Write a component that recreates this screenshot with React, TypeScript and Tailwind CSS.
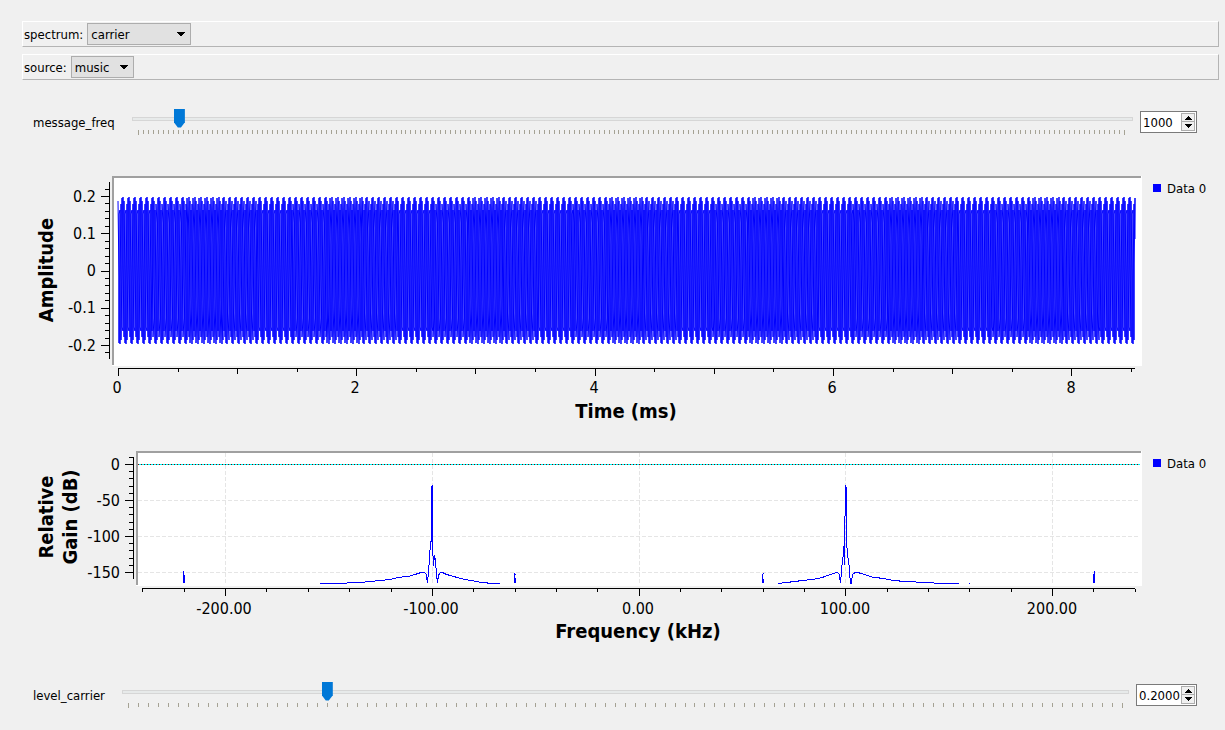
import React, { useState } from 'react';

const SAMPLE_COUNT = 4096;
const LAYERS = 6;

const range = (from: number, to: number) =>
  Array.from({ length: to - from + 1 }, (_, i) => from + i);

// 100 kHz carrier sampled at 480 kHz, snapped to whole pixels.
// Split into layers so overlapping strokes build up on each other.
const carrierLayers = (() => {
  const points = range(0, SAMPLE_COUNT - 1).map((n) => {
    const phase = ((75 * n + 20) * Math.PI) / 180;
    return [
      Math.round(118.49 + (n * 1016.5) / (SAMPLE_COUNT - 1)),
      Math.round(270.5 - 73.5 * Math.cos(phase)),
    ];
  });
  const layers: string[] = Array(LAYERS).fill('');
  for (let i = 1; i < points.length; i++) {
    const [x0, y0] = points[i - 1];
    const [x1, y1] = points[i];
    layers[i % LAYERS] += `M${x0} ${y0}L${x1} ${y1}`;
  }
  return layers;
})();

const LEFT_PEAK =
  '320,583 345,583 350,582 361,582 370,581 381,580 390,579 398,577 408,576 415,574 421,572 424,572 426,574 427,583 428,572 429,560 430,543 431,540 431,486 432,485 432,540 433,566 434,555 435,560 436,572 437,583 438,575 440,572 442,572 446,574 453,576 460,578 470,580 481,582 491,583 500,583';
const RIGHT_PEAK =
  '778,583 787,582 795,581 803,580 813,579 822,577 830,574 837,572 839,574 840,583 841,573 842,560 843,555 844,540 844,565 845,485 846,487 846,540 847,553 848,560 849,568 850,583 851,583 852,574 855,572 857,572 864,574 873,577 883,578 893,580 903,581 923,582 940,583 959,583';
const SPURS = 'M183 571V583M184 575V583M514 573V583M515 578V583M515 574V575M762 574V583M763 573V574M763 579V583M1093 574V583M1094 571V583M969 583H970';

type ToolbarProps = { id: string; label: string; options: string[]; width: string };

const Toolbar = ({ id, label, options, width }: ToolbarProps) => (
  <div className="flex h-[26px] items-center gap-1 border border-t-white border-l-white border-r-[#b4b4b4] border-b-[#b4b4b4] pl-px">
    <label htmlFor={id} className="pt-[2px]">{label}</label>
    <div className={`relative ${width}`}>
      <select
        id={id}
        className="block h-[22px] w-full appearance-none border border-[#adadad] bg-[#e1e1e1] pt-[2px] pl-[3px] outline-none"
      >
        {options.map((o) => (
          <option key={o}>{o}</option>
        ))}
      </select>
      <svg
        className="pointer-events-none absolute top-2 right-[5px] h-[5px] w-[9px]"
        viewBox="0 0 9 5"
        shapeRendering="crispEdges"
      >
        <path d="M0 1H8V2H0zM1 2H7V3H1zM2 3H6V4H2zM3 4H5V5H3z" />
      </svg>
    </div>
  </div>
);

type SliderRowProps = {
  id: string;
  min: number;
  max: number;
  step: number;
  initial: number;
  digits: number;
  ticks: number;
  labelWidth: string;
  boxWidth: string;
};

const SliderRow = ({ id, min, max, step, initial, digits, ticks, labelWidth, boxWidth }: SliderRowProps) => {
  const [value, setValue] = useState(initial);
  const nudge = (d: number) => setValue((v) => Math.min(max, Math.max(min, v + d)));

  return (
    <div className="flex items-center pr-7 pl-[33px]">
      <label htmlFor={id} className={`pt-[2px] ${labelWidth}`}>{id}</label>
      <div className="flex-1">
        <input
          id={id}
          type="range"
          min={min}
          max={max}
          step={step}
          value={value}
          onChange={(e) => setValue(Number(e.target.value))}
          className="block h-[19px] w-full appearance-none bg-transparent outline-none [&::-webkit-slider-runnable-track]:h-1 [&::-webkit-slider-runnable-track]:border [&::-webkit-slider-runnable-track]:border-[#d6d6d6] [&::-webkit-slider-runnable-track]:bg-[#e7eaea] [&::-webkit-slider-thumb]:-mt-[9px] [&::-webkit-slider-thumb]:h-[19px] [&::-webkit-slider-thumb]:w-[11px] [&::-webkit-slider-thumb]:appearance-none [&::-webkit-slider-thumb]:bg-[#0078d7] [&::-webkit-slider-thumb]:[clip-path:polygon(0_0,100%_0,100%_72%,64%_100%,36%_100%,0_72%)]"
        />
        <div className="mt-[2px] flex h-[5px] justify-between px-[6px]">
          {range(1, ticks).map((n) => (
            <span key={n} className="h-1 w-px bg-[#a5a294] first:h-[5px] last:h-[5px]" />
          ))}
        </div>
      </div>
      <div className={`ml-[7px] flex h-[22px] border border-[#7a7a7a] bg-white p-px ${boxWidth}`}>
        <input
          aria-label={`${id} value`}
          value={value.toFixed(digits)}
          onChange={(e) => setValue(Number(e.target.value) || 0)}
          className="min-w-0 flex-1 pt-[2px] pl-px outline-none"
        />
        <div className="flex w-[14px] flex-col">
          <button
            aria-label={`increase ${id}`}
            onClick={() => nudge(step)}
            className="flex h-[9px] items-center justify-center border border-[#adadad] bg-[#f0f0f0]"
          >
            <svg className="h-1 w-[7px]" viewBox="0 0 7 4" shapeRendering="crispEdges">
              <path d="M3 0H4V1H3zM2 1H5V2H2zM1 2H6V3H1zM0 3H7V4H0z" />
            </svg>
          </button>
          <button
            aria-label={`decrease ${id}`}
            onClick={() => nudge(-step)}
            className="flex h-[9px] items-center justify-center border border-t-0 border-[#adadad] bg-[#f0f0f0]"
          >
            <svg className="h-1 w-[7px]" viewBox="0 0 7 4" shapeRendering="crispEdges">
              <path d="M0 0H7V1H0zM1 1H6V2H1zM2 2H5V3H2zM3 3H4V4H3z" />
            </svg>
          </button>
        </div>
      </div>
    </div>
  );
};

const Legend = () => (
  <div className="mt-[9px] ml-[11px] flex w-[72px] items-center gap-[6px]">
    <span className="size-2 bg-[#0000ff]" />
    <span className="pt-[2px]">Data 0</span>
  </div>
);

const TimePlot = () => (
  <svg className="min-w-0 flex-1" viewBox="30 170 1112 256" role="img" aria-label="Amplitude over time">
    {/* canvas with sunken frame */}
    <path d="M112 176H1142V366H112z" fill="#fff" />
    <path d="M112 176H1141V178H114V365H112z" fill="#a0a0a0" />

    {carrierLayers.map((d, i) => (
      <path key={i} d={d} fill="none" stroke="#0000ff" strokeWidth="1" />
    ))}

    {/* axes */}
    <g shapeRendering="crispEdges">
      <path d="M109 182H110V359H109zM118 368H1135V369H118z" />
      {range(-11, 11).map((n) => {
        const major = n % 5 === 0 && Math.abs(n) <= 10;
        return (
          <rect
            key={n}
            x={major ? 101 : 105}
            y={Math.round(270.5 - n * 7.45)}
            width={major ? 8 : 4}
            height="1"
          />
        );
      })}
      {range(0, 17).map((n) => (
        <rect
          key={n}
          x={Math.round(118 + n * 59.58)}
          y="369"
          width="1"
          height={n % 4 === 0 ? 7 : n % 2 === 0 ? 5 : 3}
        />
      ))}
    </g>

    <g fontSize="16" textAnchor="end">
      {['0.2', '0.1', '0', '-0.1', '-0.2'].map((t, i) => (
        <text key={t} x="96" y={202 + Math.floor(i * 37.3)}>{t}</text>
      ))}
    </g>
    <g fontSize="16" textAnchor="middle">
      {[0, 2, 4, 6, 8].map((t) => (
        <text key={t} x={Math.round(117 + t * 119.2)} y="393">{t}</text>
      ))}
    </g>
    <g fontSize="20" fontWeight="bold" textAnchor="middle">
      <text x="626" y="418">Time (ms)</text>
      <text transform="translate(53 270) rotate(-90)">Amplitude</text>
    </g>
  </svg>
);

const FrequencyPlot = () => (
  <svg className="min-w-0 flex-1" viewBox="30 445 1112 200" role="img" aria-label="Relative gain over frequency">
    <path d="M136 451H1142V586H136z" fill="#fff" />
    <path d="M136 451H1141V453H138V585H136z" fill="#a0a0a0" />

    <g stroke="#e5e5e5" strokeDasharray="4 2" shapeRendering="crispEdges">
      {[500.5, 536.5, 572.5].map((y) => (
        <line key={y} x1="138" x2="1140" y1={y} y2={y} />
      ))}
      {[225.5, 432.5, 639.5, 845.5, 1052.5].map((x) => (
        <line key={x} x1={x} x2={x} y1="453" y2="584" />
      ))}
    </g>
    <g shapeRendering="crispEdges">
      <line x1="138" x2="1140" y1="464.5" y2="464.5" stroke="#00ffff" />
      <line x1="138" x2="1140" y1="464.5" y2="464.5" stroke="#800000" strokeDasharray="1 2" />
    </g>

    <g fill="none" stroke="#0000ff" shapeRendering="crispEdges" transform="translate(0.4 0.4)">
      <polyline points={LEFT_PEAK} />
      <polyline points={RIGHT_PEAK} />
      <path d={SPURS} />
    </g>

    {/* axes */}
    <g shapeRendering="crispEdges">
      <path d="M133 457H134V579H133zM142 588H1135V589H142z" />
      {range(-1, 15).map((n) => {
        const major = n % 5 === 0;
        return (
          <rect
            key={n}
            x={major ? 125 : 129}
            y={Math.round(464 + n * 7.2)}
            width={major ? 8 : 4}
            height="1"
          />
        );
      })}
      {range(-12, 12).map((n) => (
        <rect
          key={n}
          x={Math.round(638.6 + n * 41.35)}
          y="589"
          width="1"
          height={n % 5 === 0 ? 7 : 3}
        />
      ))}
    </g>

    <g fontSize="16" textAnchor="end">
      {['0', '-50', '-100', '-150'].map((t, i) => (
        <text key={t} x="120" y={470 + i * 36}>{t}</text>
      ))}
    </g>
    <g fontSize="16" textAnchor="middle">
      {[-200, -100, 0, 100, 200].map((f) => (
        <text key={f} x={Math.round(638 + f * 2.07)} y="614">{f.toFixed(2)}</text>
      ))}
    </g>
    <g fontSize="20" fontWeight="bold" textAnchor="middle">
      <text x="638" y="638">Frequency (kHz)</text>
      <text transform="translate(53 517) rotate(-90)">Relative</text>
      <text transform="translate(77 517) rotate(-90)">Gain (dB)</text>
    </g>
  </svg>
);

export default function App() {
  return (
    <main className="min-h-screen bg-[#f0f0f0] pt-[21px] pb-[22px] font-['DejaVu_Sans_Condensed','Noto_Sans',sans-serif] text-[13px] leading-4 text-black">
      <div className="mr-[6px] ml-[22px] flex flex-col gap-[7px]">
        <Toolbar id="spectrum" label="spectrum:" options={['carrier', 'message']} width="w-[104px]" />
        <Toolbar id="source" label="source:" options={['music', 'tone']} width="w-[63px]" />
      </div>

      <div className="mt-[29px]">
        <SliderRow
          id="message_freq"
          min={180}
          max={20000}
          step={10}
          initial={1000}
          digits={0}
          ticks={200}
          labelWidth="w-[99px]"
          boxWidth="w-[57px]"
        />
      </div>

      <section className="mt-[35px] flex items-start pl-[30px]">
        <TimePlot />
        <Legend />
      </section>

      <section className="mt-[19px] flex items-start pl-[30px]">
        <FrequencyPlot />
        <Legend />
      </section>

      <div className="mt-[37px]">
        <SliderRow
          id="level_carrier"
          min={0}
          max={1}
          step={0.01}
          initial={0.2}
          digits={4}
          ticks={101}
          labelWidth="w-[89px]"
          boxWidth="w-[61px]"
        />
      </div>
    </main>
  );
}
